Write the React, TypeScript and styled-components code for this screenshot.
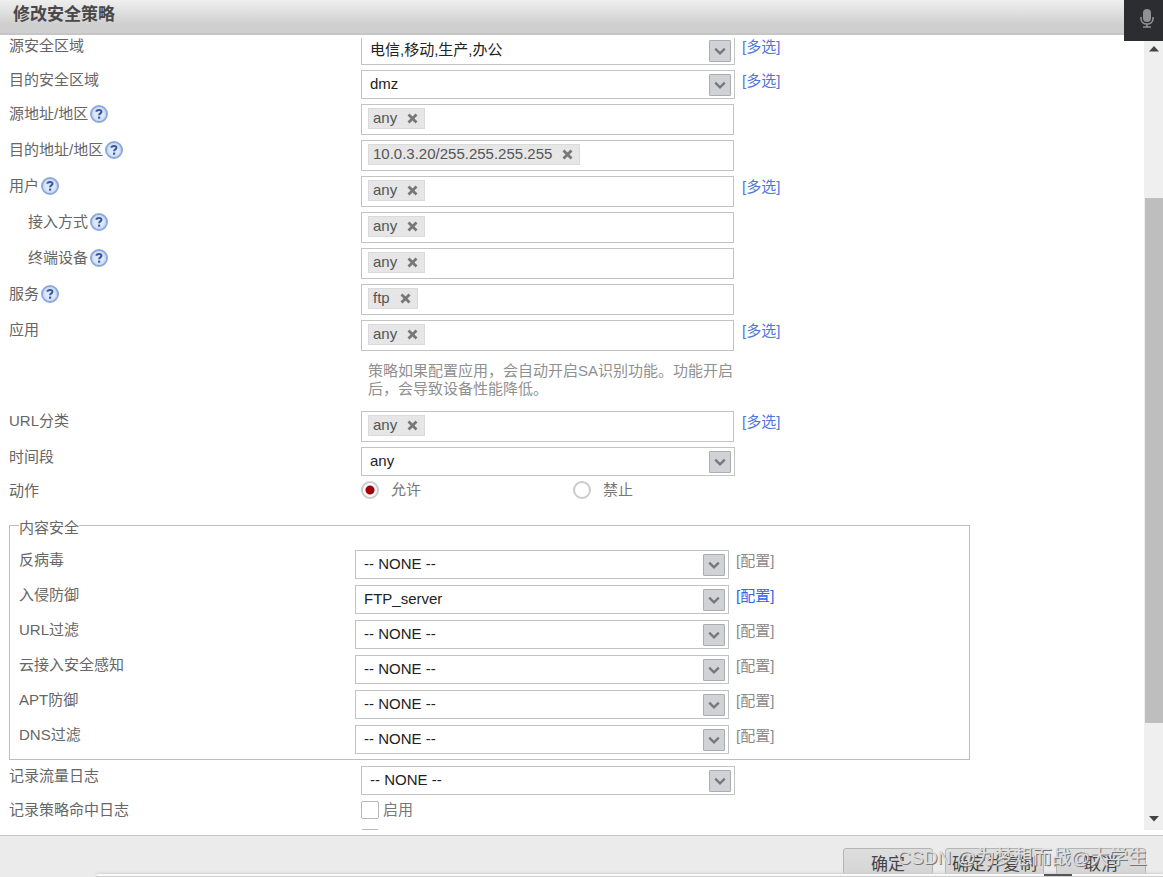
import React, { useId, useState } from 'react';
import styled, { createGlobalStyle, css } from 'styled-components';

const GlobalStyle = createGlobalStyle`
  * { box-sizing: border-box; }
  body {
    margin: 0;
    background: #fff;
    color: #666;
    font-family: "Liberation Sans", "Noto Sans CJK SC", sans-serif;
    font-size: 15px;
    line-height: 20px;
  }
  button, input, select { font: inherit; }
`;

const Dialog = styled.div`
  position: relative;
  display: flex;
  flex-direction: column;
  height: 100vh;
  overflow: hidden;
`;

const Header = styled.header`
  flex: none;
  height: 35px;
  padding: 5px 13px;
  background: linear-gradient(#efefef, #dedede 40%, #cecece 75%, #cfcfcf);
  border-bottom: 2px solid #c6c6c6;
`;

const Title = styled.h1`
  margin: 0;
  font-size: 17px;
  line-height: 20px;
  color: #484848;
`;

const VoiceButton = styled.button`
  position: absolute;
  top: 0;
  right: 0;
  z-index: 2;
  display: flex;
  justify-content: center;
  width: 39px;
  height: 41px;
  padding: 9px 0 0 6px;
  border: 0;
  background: #2b2d30;
`;

const Body = styled.main`
  display: flex;
  flex: 1;
  min-height: 0;
  padding: 3px 0 5px;
`;

const Viewport = styled.div`
  flex: 1;
  min-width: 0;
  overflow: hidden;
`;

const Form = styled.form`
  display: flex;
  flex-direction: column;
  gap: 5px;
  margin: -2px 9px 0;
`;

const Row = styled.div<{ $inner?: boolean }>`
  display: grid;
  grid-template-columns: ${(p) => (p.$inner ? '336px' : '352px')} minmax(0, 374px) auto;
  justify-content: start;
  align-items: start;
`;

const CheckRow = styled(Row)`
  min-height: 23px;
`;

const LabelCell = styled.div<{ $indent?: boolean }>`
  display: flex;
  align-items: center;
  gap: 2px;
  height: 20px;
  padding-left: ${(p) => (p.$indent ? '19px' : '0')};
`;

const HelpButton = styled.button`
  display: flex;
  padding: 0;
  border: 0;
  background: none;
`;

const SelectBox = styled.div`
  display: grid;
  grid-template-columns: 1fr 22px 4px;
  align-items: center;
  height: 29px;
`;

const Select = styled.select`
  grid-area: 1 / 1 / 2 / 4;
  width: 100%;
  height: 29px;
  padding: 0 28px 2px 8px;
  border: 1px solid #c3c3c3;
  border-radius: 0;
  background: #fff;
  color: #222;
  appearance: none;
`;

const SelectArrow = styled.span`
  grid-area: 1 / 2 / 2 / 3;
  display: flex;
  align-items: center;
  justify-content: center;
  height: 22px;
  border: 1px solid #a9acb0;
  border-radius: 1px;
  background: #d0d2d6;
  pointer-events: none;
`;

const TagBox = styled.div`
  display: flex;
  align-items: flex-start;
  height: 31px;
  margin-right: 1px;
  padding: 3px 6px;
  border: 1px solid #c3c3c3;
`;

const Tag = styled.span`
  display: flex;
  flex: none;
  align-items: center;
  gap: 10px;
  height: 21px;
  padding: 0 6px 2px 4px;
  border: 1px solid #dadada;
  background: #e6e6e6;
  color: #555;
`;

const TagRemove = styled.button`
  display: flex;
  padding: 2px 0 0;
  border: 0;
  background: none;
`;

const TagInput = styled.input`
  flex: 1;
  min-width: 0;
  height: 21px;
  border: 0;
  outline: 0;
  background: none;
`;

const Action = styled.a<{ $tone?: 'link' | 'active' | 'muted' }>`
  padding: 1px 7px;
  white-space: nowrap;
  text-decoration: none;
  color: ${(p) => (p.$tone === 'active' ? '#2f62f0' : p.$tone === 'muted' ? '#8a8a8a' : '#4f76dc')};
`;

const Hint = styled.p`
  grid-column: 2;
  margin: 0;
  padding: 6px 0 8px 7px;
  line-height: 18px;
  color: #909090;
`;

const Options = styled.div`
  display: grid;
  grid-template-columns: 212px auto;
  justify-content: start;
`;

const Option = styled.label<{ $gap: number }>`
  display: flex;
  align-items: center;
  gap: ${(p) => p.$gap}px;
  height: ${(p) => (p.$gap > 4 ? 18 : 20)}px;
  color: #777;
`;

const control = css`
  flex: none;
  width: 18px;
  height: 18px;
  margin: 0;
  background: #fff;
  appearance: none;
`;

const Radio = styled.input`
  ${control}
  border: 2px solid #cacaca;
  border-radius: 50%;
  &:checked {
    background: radial-gradient(circle, #a00008 4px, #fff 5px);
  }
`;

const Checkbox = styled.input`
  ${control}
  border: 1px solid #b8b8b8;
  border-radius: 2px;
  &:checked { background: #a00008; }
`;

const Group = styled.fieldset`
  display: flex;
  flex-direction: column;
  gap: 6px;
  width: 100%;
  max-width: 961px;
  min-width: 0;
  margin: 6px 0 1px;
  padding: 12px 9px 5px;
  border: 1px solid #bdbdbd;
`;

const GroupTitle = styled.legend`
  padding: 6px 0 0;
`;

const ScrollBar = styled.div`
  display: flex;
  flex: none;
  flex-direction: column;
  width: 19px;
  background: #efefef;
`;

const ScrollArrow = styled.button`
  display: flex;
  flex: none;
  align-items: center;
  justify-content: center;
  height: 22px;
  padding: 0;
  border: 0;
  background: none;
`;

const ScrollSpace = styled.div<{ $grow: number }>`
  flex: ${(p) => p.$grow} 0 0;
`;

const ScrollThumb = styled(ScrollSpace)`
  margin-left: 1px;
  background: #bebebe;
`;

const Footer = styled.footer`
  display: flex;
  flex: none;
  justify-content: flex-end;
  align-items: flex-start;
  gap: 12px;
  height: 42px;
  padding: 12px 17px 0;
  overflow: hidden;
  border-top: 1px solid #c4c4c4;
  background: #ebebeb;
`;

const FooterButton = styled.button`
  min-width: 90px;
  height: 34px;
  padding: 0 6px;
  border: 1px solid #b4b4b4;
  border-radius: 3px;
  background: linear-gradient(#dedede, #d2d2d2);
  font-size: 17px;
  color: #444;
`;

const EdgeStrip = styled.div`
  position: absolute;
  right: 0;
  bottom: 0;
  left: 96px;
  display: flex;
  justify-content: flex-end;
  height: 3px;
  padding-right: 91px;
  border-bottom: 1px solid #d0d0d0;
  border-top-left-radius: 3px;
  background: #fafafa;
  box-shadow: 0 -1px 3px #cfcfcf;
`;

const EdgeHandle = styled.span`
  width: 28px;
  height: 2px;
  background: #555;
`;

const Watermark = styled.div`
  position: absolute;
  right: 16px;
  bottom: 6px;
  font-size: 19px;
  line-height: 26px;
  white-space: nowrap;
  color: #dedede;
  text-shadow: 1px 1px 0 #777;
  pointer-events: none;
`;

const HelpIcon = () => (
  <svg width="18" height="18" viewBox="0 0 18 18" aria-hidden="true">
    <circle cx="9" cy="9" r="8" fill="#dfe8f6" stroke="#8ba9de" strokeWidth="2" />
    <circle cx="9" cy="9" r="6.3" fill="none" stroke="#c3d3ee" strokeWidth="1" />
    <path d="M6.4 6.8C6.5 4.4 11.5 4.2 11.5 6.8C11.5 8.5 9.1 8.4 9.1 10.3" fill="none" stroke="#37579f" strokeWidth="2" />
    <rect x="8" y="11.6" width="2.2" height="2.1" fill="#37579f" />
  </svg>
);

const RemoveIcon = () => (
  <svg width="11" height="11" viewBox="0 0 11 11" aria-hidden="true">
    <path d="M1.5 1.5L9.5 9.5M9.5 1.5L1.5 9.5" stroke="#777" strokeWidth="2.8" />
  </svg>
);

const ChevronIcon = () => (
  <svg width="14" height="10" viewBox="0 0 14 10" aria-hidden="true">
    <path d="M2.2 2.6L7 7.4L11.8 2.6" fill="none" stroke="#74777b" strokeWidth="2.2" />
  </svg>
);

const MicIcon = () => (
  <svg width="14" height="19" viewBox="0 0 14 19" aria-hidden="true">
    <rect x="3" y="0" width="8" height="13" rx="4" fill="#8f9193" />
    <path d="M1 8V9.5C1 13 3.6 15 7 15S13 13 13 9.5V8M7 15V18M3 18H11" fill="none" stroke="#8f9193" strokeWidth="1.6" />
  </svg>
);

const TriangleIcon = ({ down }: { down?: boolean }) => (
  <svg width="10" height="6" viewBox="0 0 10 6" aria-hidden="true">
    <path d={down ? 'M0 0H10L5 5.5Z' : 'M0 5.5H10L5 0Z'} fill="#444" />
  </svg>
);

interface RowProps {
  label: string;
  help?: boolean;
  indent?: boolean;
  inner?: boolean;
  action?: string;
  tone?: 'link' | 'active' | 'muted';
}

function FieldRow({ label, help, indent, inner, action, tone, id, children }: RowProps & { id: string; children: React.ReactNode }) {
  return (
    <Row $inner={inner}>
      <LabelCell $indent={indent}>
        <label htmlFor={id}>{label}</label>
        {help && (
          <HelpButton type="button" aria-label={`${label} 帮助`}>
            <HelpIcon />
          </HelpButton>
        )}
      </LabelCell>
      {children}
      {action && (
        <Action href="#" $tone={tone}>
          [{action}]
        </Action>
      )}
    </Row>
  );
}

function SelectRow({ value, ...row }: RowProps & { value: string }) {
  const id = useId();
  return (
    <FieldRow id={id} {...row}>
      <SelectBox>
        <Select id={id} defaultValue={value}>
          <option>{value}</option>
        </Select>
        <SelectArrow>
          <ChevronIcon />
        </SelectArrow>
      </SelectBox>
    </FieldRow>
  );
}

function TagRow({ value, ...row }: RowProps & { value: string }) {
  const id = useId();
  return (
    <FieldRow id={id} {...row}>
      <TagBox>
        <Tag>
          {value}
          <TagRemove type="button" aria-label={`移除 ${value}`}>
            <RemoveIcon />
          </TagRemove>
        </Tag>
        <TagInput id={id} type="text" />
      </TagBox>
    </FieldRow>
  );
}

const profiles = [
  { label: '反病毒', value: '-- NONE --' },
  { label: '入侵防御', value: 'FTP_server' },
  { label: 'URL过滤', value: '-- NONE --' },
  { label: '云接入安全感知', value: '-- NONE --' },
  { label: 'APT防御', value: '-- NONE --' },
  { label: 'DNS过滤', value: '-- NONE --' },
];

export default function App() {
  const [permit, setPermit] = useState(true);
  return (
    <Dialog>
      <GlobalStyle />
      <Header>
        <Title>修改安全策略</Title>
      </Header>
      <VoiceButton type="button" aria-label="语音">
        <MicIcon />
      </VoiceButton>
      <Body>
        <Viewport>
          <Form>
            <SelectRow label="源安全区域" value="电信,移动,生产,办公" action="多选" />
            <SelectRow label="目的安全区域" value="dmz" action="多选" />
            <TagRow label="源地址/地区" help value="any" />
            <TagRow label="目的地址/地区" help value="10.0.3.20/255.255.255.255" />
            <TagRow label="用户" help value="any" action="多选" />
            <TagRow label="接入方式" help indent value="any" />
            <TagRow label="终端设备" help indent value="any" />
            <TagRow label="服务" help value="ftp" />
            <TagRow label="应用" value="any" action="多选" />
            <Row>
              <Hint>策略如果配置应用，会自动开启SA识别功能。功能开启后，会导致设备性能降低。</Hint>
            </Row>
            <TagRow label="URL分类" value="any" action="多选" />
            <SelectRow label="时间段" value="any" />
            <Row role="radiogroup" aria-labelledby="action-label">
              <LabelCell id="action-label">动作</LabelCell>
              <Options>
                <Option $gap={12}>
                  <Radio type="radio" name="action" checked={permit} onChange={() => setPermit(true)} />
                  允许
                </Option>
                <Option $gap={12}>
                  <Radio type="radio" name="action" checked={!permit} onChange={() => setPermit(false)} />
                  禁止
                </Option>
              </Options>
            </Row>
            <Group>
              <GroupTitle>内容安全</GroupTitle>
              {profiles.map((p) => (
                <SelectRow
                  key={p.label}
                  inner
                  label={p.label}
                  value={p.value}
                  action="配置"
                  tone={p.value === '-- NONE --' ? 'muted' : 'active'}
                />
              ))}
            </Group>
            <SelectRow label="记录流量日志" value="-- NONE --" />
            <CheckRow>
              <LabelCell id="hit-log">记录策略命中日志</LabelCell>
              <Option $gap={4}>
                <Checkbox type="checkbox" aria-describedby="hit-log" />
                启用
              </Option>
            </CheckRow>
            <CheckRow>
              <LabelCell />
              <Option $gap={4}>
                <Checkbox type="checkbox" aria-label="会话日志" />
              </Option>
            </CheckRow>
          </Form>
        </Viewport>
        <ScrollBar>
          <ScrollArrow type="button" aria-label="向上滚动">
            <TriangleIcon />
          </ScrollArrow>
          <ScrollSpace $grow={138} />
          <ScrollThumb $grow={525} />
          <ScrollSpace $grow={85} />
          <ScrollArrow type="button" aria-label="向下滚动">
            <TriangleIcon down />
          </ScrollArrow>
        </ScrollBar>
      </Body>
      <Footer>
        <FooterButton type="button">确定</FooterButton>
        <FooterButton type="button">确定并复制</FooterButton>
        <FooterButton type="button">取消</FooterButton>
      </Footer>
      <EdgeStrip>
        <EdgeHandle />
      </EdgeStrip>
      <Watermark>CSDN @为梦想而战@大学生</Watermark>
    </Dialog>
  );
}
